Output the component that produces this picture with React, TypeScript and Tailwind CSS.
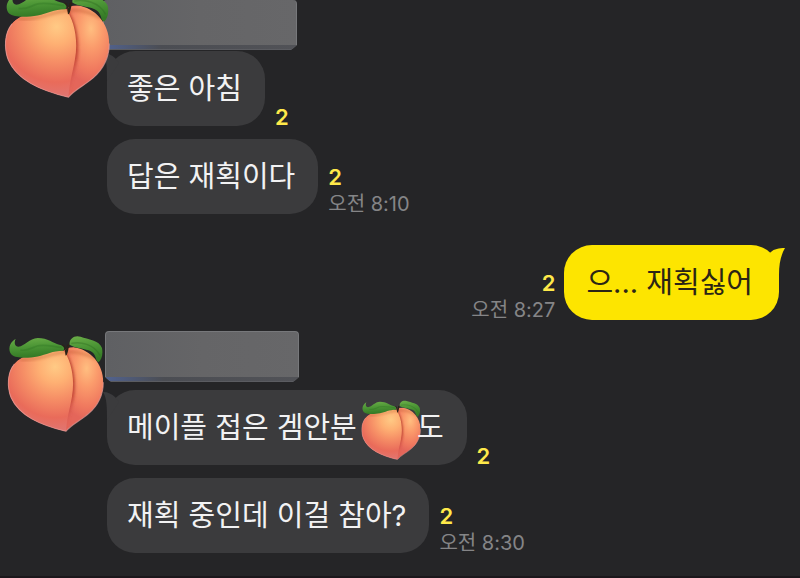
import React, { useId } from "react";
import clsx from "clsx";

interface PeachProps {
  className?: string;
}

function Peach({ className }: PeachProps) {
  const id = useId();
  const right = `${id}-right`;
  const left = `${id}-left`;
  const leaf = `${id}-leaf`;
  const shade = `${id}-shade`;
  const soft = `${id}-soft`;
  const clip = `${id}-clip`;

  return (
    <svg viewBox="20 15 290 290" className={className} aria-hidden="true">
      <defs>
        <radialGradient id={right} gradientUnits="userSpaceOnUse" cx="258" cy="115" r="150" gradientTransform="translate(258 115) scale(0.6 1) translate(-258 -115)">
          <stop offset="0" stopColor="#ffbe80" />
          <stop offset="0.35" stopColor="#fb9c6c" />
          <stop offset="0.75" stopColor="#f07a5f" />
          <stop offset="1" stopColor="#e4665a" />
        </radialGradient>
        <radialGradient id={left} gradientUnits="userSpaceOnUse" cx="164" cy="110" r="190">
          <stop offset="0" stopColor="#ffca85" />
          <stop offset="0.25" stopColor="#feb073" />
          <stop offset="0.5" stopColor="#f68f66" />
          <stop offset="0.8" stopColor="#e96b5a" />
          <stop offset="1" stopColor="#e17570" />
        </radialGradient>
        <linearGradient id={leaf} x1="0" y1="0" x2="0.2" y2="1">
          <stop offset="0" stopColor="#6cae48" />
          <stop offset="0.5" stopColor="#4b9535" />
          <stop offset="1" stopColor="#357a26" />
        </linearGradient>
        <linearGradient id={shade} x1="0" y1="0" x2="0" y2="1">
          <stop offset="0" stopColor="#a8341f" stopOpacity="0.95" />
          <stop offset="0.55" stopColor="#b8382b" stopOpacity="0.8" />
          <stop offset="1" stopColor="#d4544a" stopOpacity="0" />
        </linearGradient>
        <filter id={soft} x="-80%" y="-20%" width="260%" height="140%">
          <feGaussianBlur stdDeviation="4" />
        </filter>
        <clipPath id={clip}>
          <path d="M190 62C140 56 70 68 42 102C20 128 20 172 32 202C56 256 118 284 196 303C214 282 238 272 264 250C294 224 308 190 308 156C308 100 268 58 222 52C206 51 196 56 190 62Z" />
        </clipPath>
      </defs>
      <g clipPath={`url(#${clip})`}>
        <rect x="15" y="40" width="300" height="270" fill={`url(#${right})`} />
        <path
          d="M192 64C216 92 230 150 220 204C214 236 204 262 198 300L190 300C194 250 196 180 186 110Z"
          fill={`url(#${shade})`}
          filter={`url(#${soft})`}
        />
        <path
          d="M188 60C212 90 224 146 214 200C208 236 199 262 196 306L15 306V40H170Z"
          fill={`url(#${left})`}
        />
        <path
          d="M60 88C105 94 140 74 192 66C205 68 225 56 285 86"
          fill="none"
          stroke="#a8491f"
          strokeWidth="6"
          opacity="0.4"
          filter={`url(#${soft})`}
        />
      </g>
      <path
        d="M42 102C20 128 20 172 32 202C56 256 118 284 196 303C214 282 238 272 264 250C294 224 308 190 308 156"
        fill="none"
        stroke="#eca09b"
        strokeWidth="3"
        opacity="0.7"
      />
      <path
        d="M184 44C192 50 193 60 195 76C200 78 203 62 206 44C200 38 198 52 196 60C195 48 190 42 184 44Z"
        fill="#2b2217"
      />
      <path
        d="M46 26C26 38 22 60 34 74C48 86 86 84 112 79C138 74 156 62 188 62C196 54 186 46 176 44C158 40 142 24 112 24C86 25 74 48 54 50C44 50 40 38 46 26Z"
        fill={`url(#${leaf})`}
      />
      <path
        d="M60 60C80 64 92 54 110 48C130 42 150 48 184 52"
        fill="none"
        stroke="#2f7423"
        strokeWidth="5"
        opacity="0.35"
      />
      <path
        d="M207 44C205 26 222 14 240 20C262 28 296 30 304 54C308 74 302 88 294 96C282 92 290 72 268 62C246 54 222 54 207 44Z"
        fill={`url(#${leaf})`}
      />
      <path
        d="M212 40C240 34 280 42 298 76"
        fill="none"
        stroke="#2a6520"
        strokeWidth="4"
        opacity="0.35"
      />
    </svg>
  );
}

interface NamePlateProps {
  className?: string;
}

// blanked-out sender name
function NamePlate({ className }: NamePlateProps) {
  return (
    <div
      className={clsx(
        "flex w-[194px] flex-col rounded-sm border border-[#77787b] border-b-[#5b5c61] bg-gradient-to-r from-[#5f6063] via-[#656567] to-[#676769] [clip-path:polygon(0_0,100%_0,100%_90%,97%_100%,3%_100%,0_90%)]",
        className
      )}
    >
      <div className="mt-auto h-1 bg-gradient-to-r from-[#51628f] via-[#4b4d53] via-30% to-[#515257]" />
    </div>
  );
}

interface BubbleProps {
  children: React.ReactNode;
  mine?: boolean;
  tail?: boolean;
}

function Bubble({ children, mine, tail }: BubbleProps) {
  return (
    <div
      className={clsx(
        "relative rounded-[28px] py-5 text-[29px] leading-[35px] whitespace-nowrap",
        mine ? "bg-[#fde500] pr-[26px] pl-[22px] text-[#2b2515]" : "bg-[#3b3b3d] pr-[23px] pl-5 text-[#f2f2f3]"
      )}
    >
      {tail && !mine && (
        <svg viewBox="0 0 16 30" className="absolute top-0 -left-1 h-[30px] w-4 fill-[#3b3b3d]" aria-hidden="true">
          <path d="M0 2C5 2 9 4 12 7L16 12L4 30C4 18 4 8 0 2Z" />
        </svg>
      )}
      {tail && mine && (
        <svg viewBox="0 0 26 30" className="absolute top-0 -right-[7px] h-[30px] w-[26px] fill-[#fde500]" aria-hidden="true">
          <path d="M25 3C19 3 14 4 11 7L2 14L19 30C19 18 21 10 25 3Z" />
        </svg>
      )}
      {children}
    </div>
  );
}

interface MetaProps {
  unread: number;
  time?: string;
  mine?: boolean;
}

function Meta({ unread, time, mine }: MetaProps) {
  return (
    <div className={clsx("flex flex-col", mine && "items-end")}>
      <span className="text-[22px] leading-[18px] font-semibold text-[#ffe94a]">{unread}</span>
      {time && <time className="mt-2 text-[20px] leading-5 text-[#858587]">{time}</time>}
    </div>
  );
}

export default function App() {
  return (
    <main className="flex min-h-screen w-full flex-col overflow-hidden border-b-2 border-[#1b171b] bg-[#252527] font-[family-name:Inter,'Noto_Sans_CJK_KR',sans-serif]">
      <section className="flex items-start">
        <div className="relative z-10 w-[107px] shrink-0 pl-1">
          <Peach className="-mt-2 size-[106px] max-w-none" />
        </div>
        <div className="flex flex-col items-start">
          <NamePlate className="-ml-1 h-[50px] border-t-0" />
          <div className="mt-px flex items-end gap-[10px]">
            <Bubble tail>좋은 아침</Bubble>
            <Meta unread={2} />
          </div>
          <div className="mt-[13px] flex items-end gap-[10px]">
            <Bubble>답은 재획이다</Bubble>
            <Meta unread={2} time="오전 8:10" />
          </div>
        </div>
      </section>

      <section className="mt-[31px] flex items-end justify-end gap-[9px] pr-[21px]">
        <Meta unread={2} time="오전 8:27" mine />
        <Bubble mine tail>
          으... 재획싫어
        </Bubble>
      </section>

      <section className="mt-[11px] flex items-start">
        <div className="relative z-10 w-[107px] shrink-0 pt-1 pl-[7px]">
          <Peach className="size-[97px]" />
        </div>
        <div className="flex flex-col items-start">
          <NamePlate className="-ml-[2px] h-[51px]" />
          <div className="mt-2 flex items-end gap-[10px]">
            <Bubble tail>
              메이플 접은 겜안분 <Peach className="-my-4 -mr-1 -ml-1 inline-block size-[60px]" />도
            </Bubble>
            <Meta unread={2} />
          </div>
          <div className="mt-[13px] flex items-end gap-[10px]">
            <Bubble>재획 중인데 이걸 참아?</Bubble>
            <Meta unread={2} time="오전 8:30" />
          </div>
        </div>
      </section>
    </main>
  );
}
